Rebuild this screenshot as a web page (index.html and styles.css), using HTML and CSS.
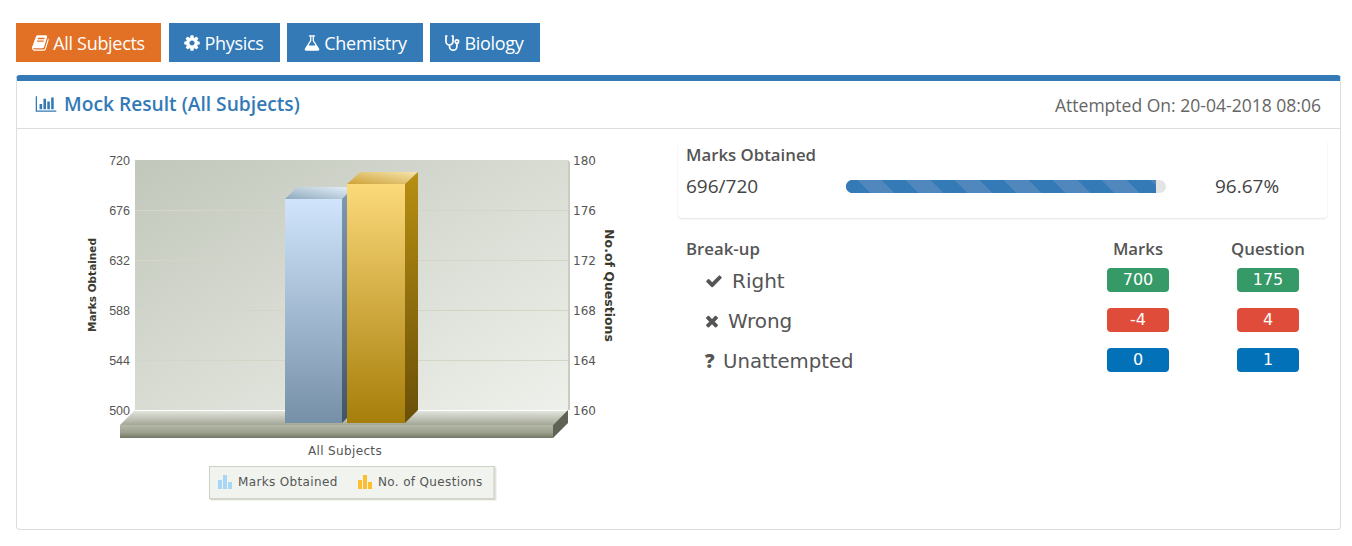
FILE: index.html
```html
<!DOCTYPE html>
<html lang="en">
<head>
<meta charset="utf-8">
<title>Mock Result</title>
<link rel="stylesheet" href="styles.css">
</head>
<body>
<nav class="tabs">
  <a class="tab tab-active"><svg class="tab-icon" viewBox="0 0 1792 1792"><path d="M1639 478q40 57 18 129l-275 906q-19 64-76.500 107.500t-122.500 43.500h-923q-77 0-148.500-53.500t-99.500-131.500q-24-67-2-127 0-4 3-27t4-37q1-8-3-21.500t-3-19.500q2-11 8-21t16.500-23.500 16.500-23.500q23-38 45-91.500t30-91.500q3-10 .5-30t-.5-28q3-11 17-28t17-23q21-36 42-92t25-90q1-9-2.500-32t.5-28q4-13 22-30.500t22-22.500q19-26 42.500-84.500t27.500-96.500q1-8-3-25.500t-2-26.500q2-8 9-18t18-23 17-21q8-12 16.500-30.500t15-35 16-36 19.500-32 26.500-23.500 36-11.500 47.500 5.500l-1 3q38-9 51-9h761q74 0 114 56t18 130l-274 906q-36 119-71.500 153.500t-128.500 34.500h-869q-27 0-38 15-11 16-1 43 24 70 144 70h923q29 0 56-15.500t35-41.500l300-987q7-22 5-57 38 15 59 43zm-1064 2q-4 13 2 22.500t20 9.500h608q13 0 25.500-9.500t16.500-22.500l21-64q4-13-2-22.500t-20-9.500h-608q-13 0-25.500 9.500t-16.500 22.500zm-83 256q-4 13 2 22.500t20 9.500h608q13 0 25.500-9.500t16.500-22.500l21-64q4-13-2-22.500t-20-9.500h-608q-13 0-25.500 9.500t-16.500 22.500z"/></svg>All Subjects</a>
  <a class="tab"><svg class="tab-icon" viewBox="0 0 1792 1792"><path d="M1152 896q0-106-75-181t-181-75-181 75-75 181 75 181 181 75 181-75 75-181zm512-109v222q0 12-8 23t-20 13l-185 28q-19 54-39 91 35 50 107 138 10 12 10 25t-9 23q-27 37-99 108t-94 71q-12 0-26-9l-138-108q-44 23-91 38-16 136-29 186-7 28-36 28h-222q-14 0-24.500-8.500t-11.500-21.500l-28-184q-49-16-90-37l-141 107q-10 9-25 9-14 0-25-11-126-114-165-168-7-10-7-23 0-12 8-23 15-21 51-66.500t54-70.500q-27-50-41-99l-183-27q-13-2-21-12.500t-8-23.500v-222q0-12 8-23t19-13l186-28q14-46 39-92-40-57-107-138-10-12-10-24 0-10 9-23 26-36 98.500-107.500t94.500-71.500q13 0 26 10l138 107q44-23 91-38 16-136 29-186 7-28 36-28h222q14 0 24.500 8.500t11.500 21.500l28 184q49 16 90 37l142-107q9-9 24-9 13 0 25 10 129 119 165 170 7 8 7 22 0 12-8 23-15 21-51 66.500t-54 70.500q26 50 41 98l183 28q13 2 21 12.500t8 23.500z"/></svg>Physics</a>
  <a class="tab"><svg class="tab-icon" viewBox="0 0 1792 1792"><path d="M1591 1448q56 89 21.500 152.500t-140.500 63.500h-1152q-106 0-140.500-63.500t21.500-152.500l503-793v-399h-64q-26 0-45-19t-19-45 19-45 45-19h512q26 0 45 19t19 45-19 45-45 19h-64v399zm-779-725l-272 429h712l-272-429-20-31v-437h-128v437z"/></svg>Chemistry</a>
  <a class="tab"><svg class="tab-icon tab-icon-line" viewBox="0 0 16 18"><path d="M3.500 2H2v5.500a3.500 3.500 0 0 0 7 0V2H7.500M5.500 11v1.500a3.700 3.700 0 0 0 7.400 0V9.500"/><circle cx="12.900" cy="7.500" r="1.700"/></svg>Biology</a>
</nav>

<section class="panel">
  <header class="panel-head">
    <h1 class="panel-title"><svg class="title-icon" viewBox="0 0 2048 1792"><path d="M640 896v512h-256v-512h256zm384-512v1024h-256v-1024h256zm1024 1152v128h-2048v-1536h128v1408h1920zm-640-896v768h-256v-768h256zm384-384v1152h-256v-1152h256z"/></svg>Mock Result (All Subjects)</h1>
    <div class="attempted">Attempted On: 20-04-2018 08:06</div>
  </header>
  <div class="panel-body">
    <svg class="chart" viewBox="17 129 653 400" width="653" height="400">
      <defs>
        <linearGradient id="wall" x1="0" y1="0" x2="1" y2="1"><stop offset="0" stop-color="#c2c7bb"/><stop offset="1" stop-color="#eef1eb"/></linearGradient>
        <linearGradient id="floorTop" x1="0" y1="0" x2="0" y2="1"><stop offset="0" stop-color="#e6e8e1"/><stop offset="1" stop-color="#a3a796"/></linearGradient>
        <linearGradient id="floorFront" x1="0" y1="0" x2="0" y2="1"><stop offset="0" stop-color="#b4b8a8"/><stop offset=".6" stop-color="#9a9f8b"/><stop offset="1" stop-color="#727766"/></linearGradient>
        <linearGradient id="blueFront" x1="0" y1="0" x2="0" y2="1"><stop offset="0" stop-color="#d0e5fc"/><stop offset="1" stop-color="#7690a8"/></linearGradient>
        <linearGradient id="blueSide" x1="0" y1="0" x2="0" y2="1"><stop offset="0" stop-color="#7f99b2"/><stop offset="1" stop-color="#3f5568"/></linearGradient>
        <linearGradient id="blueTop" x1="0" y1="1" x2="1" y2="0"><stop offset="0" stop-color="#8fa9be"/><stop offset="1" stop-color="#e3eef6"/></linearGradient>
        <linearGradient id="goldFront" x1="0" y1="0" x2="0" y2="1"><stop offset="0" stop-color="#fcd97a"/><stop offset="1" stop-color="#a67e0a"/></linearGradient>
        <linearGradient id="goldSide" x1="0" y1="0" x2="0" y2="1"><stop offset="0" stop-color="#b78f12"/><stop offset="1" stop-color="#6a4f08"/></linearGradient>
        <linearGradient id="goldTop" x1="0" y1="1" x2="1" y2="0"><stop offset="0" stop-color="#cda238"/><stop offset="1" stop-color="#f6e4ac"/></linearGradient>
      </defs>
      <rect x="135" y="160" width="433" height="250" fill="url(#wall)"/>
      <path d="M568 160l2 2v248h-2z" fill="#c9ccc1"/>
      <path class="grid" d="M135 210.500H568M135 260.500H568M135 310.500H568M135 360.500H568"/>
      <path d="M135 410H568L553 425H120z" fill="url(#floorTop)"/>
      <path d="M135 410.500H568" stroke="#fff" stroke-width="1"/>
      <rect x="120" y="425" width="433" height="13" fill="url(#floorFront)"/>
      <path d="M553 425l15-15v13l-15 15z" fill="#5f6355"/>

      <path d="M285 199l12-12h51v12l-6 0z" fill="url(#blueTop)"/>
      <path d="M342 199l6-6v224l-6 6z" fill="url(#blueSide)"/>
      <rect x="285" y="199" width="57" height="224" fill="url(#blueFront)"/>
      <path d="M347 184l13-12h58l-13 12z" fill="url(#goldTop)"/>
      <path d="M405 184l13-12v238l-13 13z" fill="url(#goldSide)"/>
      <rect x="347" y="184" width="58" height="239" fill="url(#goldFront)"/>

      <g class="axis-left">
        <text x="130" y="165">720</text><text x="130" y="215">676</text><text x="130" y="265">632</text><text x="130" y="315">588</text><text x="130" y="365">544</text><text x="130" y="415">500</text>
      </g>
      <g class="axis-right">
        <text x="573" y="165">180</text><text x="573" y="215">176</text><text x="573" y="265">172</text><text x="573" y="315">168</text><text x="573" y="365">164</text><text x="573" y="415">160</text>
      </g>
      <text class="axis-title" transform="translate(96 285) rotate(-90)">Marks Obtained</text>
      <text class="axis-title-r" transform="translate(605 285.500) rotate(90)">No.of Questions</text>
      <text class="cat" x="345" y="455">All Subjects</text>

      <rect x="211" y="468" width="286" height="33" fill="#eef0ea" opacity=".7"/>
      <rect x="209.500" y="466.500" width="285" height="32" fill="#f1f3ef" stroke="#ccd0c2"/>
      <path d="M494.500 467v32H210" fill="none" stroke="#d3d6ca" stroke-width="2"/>
      <g fill="#a9d6f5">
        <rect x="218" y="480" width="4" height="9"/><rect x="223" y="475" width="4" height="14"/><rect x="228" y="482" width="4" height="7"/>
      </g>
      <g fill="#fcc02e">
        <rect x="358" y="480" width="4" height="9"/><rect x="363" y="475" width="4" height="14"/><rect x="368" y="482" width="4" height="7"/>
      </g>
      <text class="legend" x="238" y="486">Marks Obtained</text>
      <text class="legend" x="378" y="486">No. of Questions</text>
    </svg>

    <div class="stats">
      <div class="score-card">
        <div class="score-title">Marks Obtained</div>
        <div class="score-row">
          <span class="score-value">696/720</span>
          <div class="progress"><div class="progress-bar" style="width:96.9%"></div></div>
          <span class="score-pct">96.67%</span>
        </div>
      </div>
      <div class="breakup">
        <div class="b-head">Break-up</div><div class="b-col">Marks</div><div class="b-col">Question</div>

        <div class="b-label"><svg class="b-icon" viewBox="0 0 1792 1792"><path d="M1671 566q0 40-28 68l-724 724-136 136q-28 28-68 28t-68-28l-136-136-362-362q-28-28-28-68t28-68l136-136q28-28 68-28t68 28l294 295 656-657q28-28 68-28t68 28l136 136q28 28 28 68z"/></svg><span class="b-text-right">Right</span></div>
        <div class="b-cell"><span class="badge green">700</span></div><div class="b-cell"><span class="badge green">175</span></div>

        <div class="b-label"><svg class="b-icon b-icon-x" viewBox="0 0 1408 1792"><path d="M1298 1322q0 40-28 68l-136 136q-28 28-68 28t-68-28l-294-294-294 294q-28 28-68 28t-68-28l-136-136q-28-28-28-68t28-68l294-294-294-294q-28-28-28-68t28-68l136-136q28-28 68-28t68 28l294 294 294-294q28-28 68-28t68 28l136 136q28 28 28 68t-28 68l-294 294 294 294q28 28 28 68z"/></svg><span>Wrong</span></div>
        <div class="b-cell"><span class="badge red">-4</span></div><div class="b-cell"><span class="badge red">4</span></div>

        <div class="b-label"><span class="b-q">?</span><span class="b-text-un">Unattempted</span></div>
        <div class="b-cell"><span class="badge blue">0</span></div><div class="b-cell"><span class="badge blue">1</span></div>
      </div>
    </div>
  </div>
</section>
</body>
</html>
```
FILE: styles.css
```css
* { box-sizing: border-box; }
body { margin: 0; padding: 23px 11px 0 16px; background: #fff; font-family: "Open Sans", sans-serif; color: #555; }

.tabs { display: flex; gap: 7px; height: 39px; }
.tab { display: flex; align-items: center; justify-content: center; height: 39px; background: #337ab7; color: #fff; font-size: 18px; letter-spacing: -0.3px; }
.tab:nth-child(1) { width: 145px; margin-right: 1px; }
.tab:nth-child(2) { width: 111px; padding-right: 2px; }
.tab:nth-child(3) { width: 136px; }
.tab:nth-child(4) { width: 110px; padding-right: 3px; }
.tab-active { background: #e27025; }
.tab-icon { width: 18px; height: 18px; fill: #fff; margin-right: 3px; }
.tab-icon-line { fill: none; stroke: #fff; stroke-width: 1.7; }

.panel { margin-top: 13px; height: 455px; border: 1px solid #ddd; border-top: 6px solid #337ab7; border-radius: 4px; }
.panel-head { display: flex; justify-content: space-between; align-items: center; height: 48px; padding: 0 19px 2px 18px; border-bottom: 1px solid #ddd; }
.panel-title { display: flex; align-items: center; margin: 0; font-size: 19.200px; font-weight: 600; color: #337ab7; }
.title-icon { width: 22px; height: 18px; fill: #337ab7; margin-right: 7px; }
.attempted { font-size: 17.550px; color: #666; padding-top: 2px; }

.panel-body { display: flex; }
.chart { display: block; flex: none; }
.chart text { fill: #555; }
.grid { stroke: #d3d6c6; stroke-width: 1; fill: none; }
.axis-left text { font: 12.500px "Liberation Sans", sans-serif; text-anchor: end; }
.axis-right text { font: 12px "DejaVu Sans", sans-serif; }
.chart .axis-title { font: bold 10.500px "DejaVu Sans", sans-serif; text-anchor: middle; fill: #3a3a2e; }
.chart .axis-title-r { font: bold 12.500px "DejaVu Sans", sans-serif; text-anchor: middle; fill: #3a3a2e; }
.cat { font: 12px "DejaVu Sans", sans-serif; text-anchor: middle; letter-spacing: 0.35px; }
.legend { font: 12px "DejaVu Sans", sans-serif; letter-spacing: 0.35px; }

.stats { flex: 1; padding: 11px 13px 0 8px; }
.score-card { width: 649px; height: 78px; padding: 4px 8px 0; border-radius: 4px; box-shadow: 0 1px 2px rgba(0,0,0,.12); }
.score-title { font-size: 16.800px; font-weight: 600; line-height: 22px; }
.score-row { display: flex; align-items: center; height: 30px; margin-top: 5px; font-size: 19px; color: #444; }
.score-value { width: 160px; }
.progress { width: 320px; height: 13px; background: #e4e4e4; border-radius: 7px; overflow: hidden; margin-right: 49px; }
.progress-bar { height: 100%; background-color: #337ab7; background-image: repeating-linear-gradient(45deg, #337ab7 0, #337ab7 17px, #5088bd 17px, #5088bd 34.600px); }

.breakup { display: grid; grid-template-columns: 387px 130px 130px; grid-template-rows: 22px; grid-auto-rows: 40px; margin: 20px 0 0 8px; }
.b-head, .b-col { font-size: 16.800px; font-weight: 600; line-height: 22px; }
.b-col { text-align: center; }
.b-label { display: flex; align-items: center; padding: 2px 0 0 19px; font: 20px "DejaVu Sans", sans-serif; }
.b-cell { display: flex; justify-content: center; align-items: center; }
.b-icon { width: 18px; height: 18px; fill: #555; margin-right: 8px; }
.b-icon-x { width: 14px; margin-right: 9px; }
.b-text-right { margin-left: 1px; }
.b-q { font: 800 19px "Open Sans", sans-serif; width: 18px; }
.b-text-un { font-size: 19.700px; }
.badge { display: block; width: 62px; height: 24px; border-radius: 4px; color: #fff; text-align: center; font: 16px/24px "DejaVu Sans", sans-serif; }
.green { background: #359a68; }
.red { background: #df4d3a; }
.blue { background: #0271b8; }
```
